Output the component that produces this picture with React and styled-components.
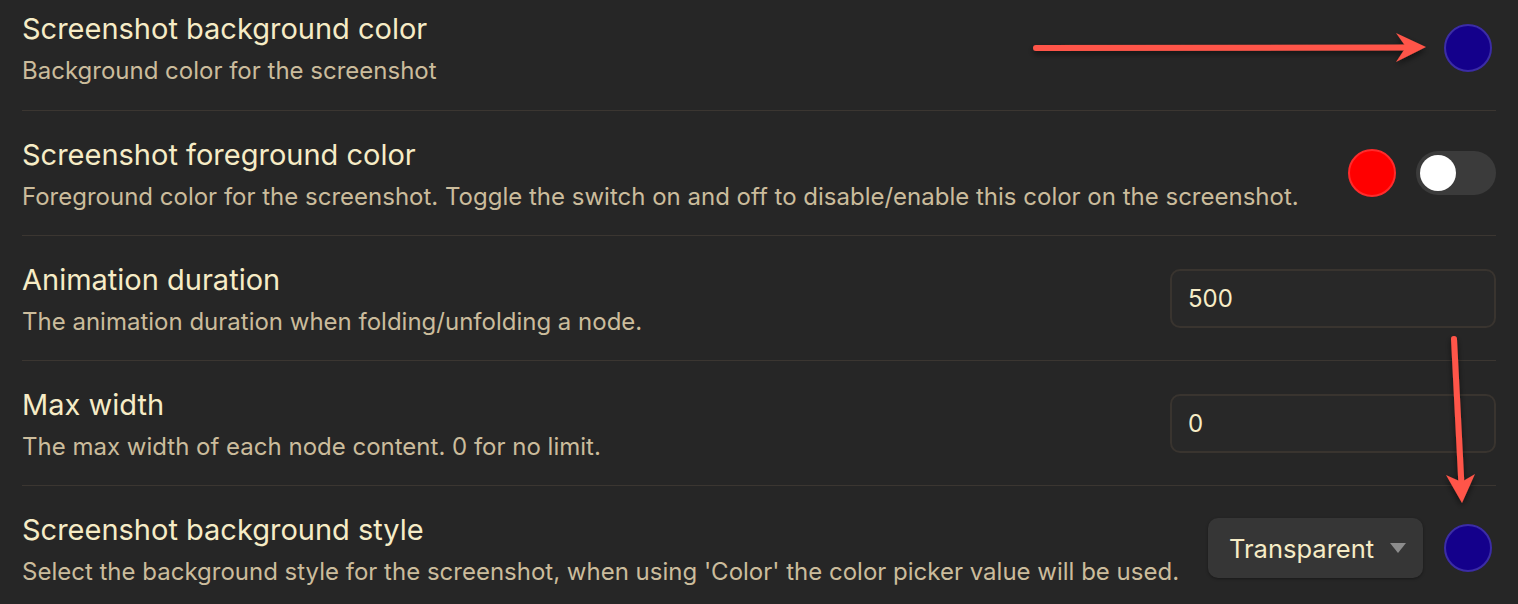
import React from "react";
import styled, { createGlobalStyle } from "styled-components";

const Global = createGlobalStyle`
  html, body { margin: 0; padding: 0; background: #262626; }
  body { font-family: Inter, "Noto Sans", sans-serif; overflow: hidden; }
`;

const Page = styled.div`
  position: relative;
  width: 1518px;
  height: 604px;
  overflow: hidden;
  background: #262626;
  padding: 0 22px;
  box-sizing: border-box;
`;

const List = styled.div`
  margin-top: -15px;
  display: flex;
  flex-direction: column;
`;

const Row = styled.div`
  display: flex;
  align-items: center;
  justify-content: space-between;
  gap: 24px;
  height: 125px;
  box-sizing: border-box;
  padding: 26px 0 24px;
  border-top: ${(p) => (p.$first ? "none" : "1px solid #3b3631")};
`;

const Info = styled.div`
  display: flex;
  flex-direction: column;
  min-width: 0;
`;

const Name = styled.div`
  font-size: 29px;
  line-height: 36px;
  color: #f6ecc6;
  white-space: nowrap;
`;

const Desc = styled.div`
  margin-top: 9px;
  font-size: 24px;
  line-height: 30px;
  color: #cbbc9c;
  white-space: nowrap;
`;

const Controls = styled.div`
  display: flex;
  align-items: center;
  gap: 16px;
  margin-top: -2px;
  flex-shrink: 0;
`;

const SwatchBox = styled.div`
  width: 57px;
  height: 48px;
  display: flex;
  align-items: center;
  justify-content: center;
`;

const Swatch = styled.div`
  width: 48px;
  height: 48px;
  border-radius: 50%;
  box-sizing: border-box;
  background: ${(p) => p.$color};
  border: 2px solid ${(p) => p.$ring};
`;

const Toggle = styled.div`
  width: 80px;
  height: 44px;
  border-radius: 22px;
  background: #3b3b3b;
  display: flex;
  align-items: center;
  padding: 0 4px;
  box-sizing: border-box;
`;

const Knob = styled.div`
  width: 36px;
  height: 36px;
  border-radius: 50%;
  background: #ffffff;
`;

const TextInput = styled.div`
  width: 326px;
  height: 59px;
  box-sizing: border-box;
  border: 2px solid #39342f;
  border-radius: 10px;
  background: #282828;
  display: flex;
  align-items: center;
  padding: 0 16px;
  font-size: 24px;
  color: #f6ecc6;
`;

const Select = styled.div`
  width: 215px;
  height: 60px;
  box-sizing: border-box;
  border-radius: 10px;
  background: #363636;
  box-shadow: 0 1px 3px rgba(0, 0, 0, 0.35);
  display: flex;
  align-items: center;
  justify-content: space-between;
  padding: 0 17px 0 21px;
  font-size: 25.5px;
  color: #f6ecc6;
`;

const Caret = styled.div`
  width: 0;
  height: 0;
  border-left: 8.5px solid transparent;
  border-right: 8.5px solid transparent;
  border-top: 10px solid #8c8c8c;
`;

const Overlay = styled.svg`
  position: absolute;
  left: 0;
  top: 0;
  pointer-events: none;
`;

const ColorDot = ({ color, ring }) => (
  <SwatchBox>
    <Swatch $color={color} $ring={ring} />
  </SwatchBox>
);

const rows = [
  {
    name: "Screenshot background color",
    desc: "Background color for the screenshot",
    controls: <ColorDot color="#14008b" ring="#3b2ca6" />,
  },
  {
    name: "Screenshot foreground color",
    desc: "Foreground color for the screenshot. Toggle the switch on and off to disable/enable this color on the screenshot.",
    controls: (
      <>
        <ColorDot color="#ff0000" ring="#ff2b2b" />
        <Toggle>
          <Knob />
        </Toggle>
      </>
    ),
  },
  {
    name: "Animation duration",
    desc: "The animation duration when folding/unfolding a node.",
    controls: <TextInput>500</TextInput>,
  },
  {
    name: "Max width",
    desc: "The max width of each node content. 0 for no limit.",
    controls: <TextInput>0</TextInput>,
  },
  {
    name: "Screenshot background style",
    desc: "Select the background style for the screenshot, when using 'Color' the color picker value will be used.",
    controls: (
      <>
        <Select>
          Transparent
          <Caret />
        </Select>
        <ColorDot color="#14008b" ring="#3b2ca6" />
      </>
    ),
  },
];

export default function App() {
  return (
    <>
      <Global />
      <Page>
        <List>
          {rows.map((r, i) => (
            <Row key={r.name} $first={i === 0}>
              <Info>
                <Name>{r.name}</Name>
                <Desc>{r.desc}</Desc>
              </Info>
              <Controls>{r.controls}</Controls>
            </Row>
          ))}
        </List>
        <Overlay width="1518" height="604" viewBox="0 0 1518 604">
          <defs>
            <filter id="sh" x="-10%" y="-50%" width="120%" height="200%">
              <feDropShadow dx="0" dy="3" stdDeviation="3" floodColor="#000" floodOpacity="0.55" />
            </filter>
          </defs>
          <g filter="url(#sh)" fill="#ff5548" stroke="#ff5548">
            <line x1="1036" y1="48" x2="1408" y2="47.5" strokeWidth="6" strokeLinecap="round" />
            <path d="M1396 33 L1426 47 L1396 62 L1406 47 Z" stroke="none" />
            <line x1="1454" y1="339" x2="1461.5" y2="486" strokeWidth="6" strokeLinecap="round" />
            <path d="M1446 475 L1462 503 L1475 474 L1461.5 482 Z" stroke="none" />
          </g>
        </Overlay>
      </Page>
    </>
  );
}
